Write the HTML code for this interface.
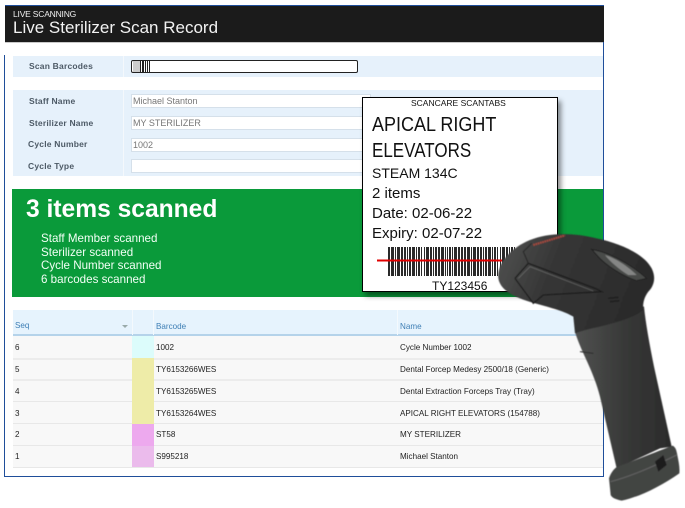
<!DOCTYPE html>
<html><head><meta charset="utf-8">
<style>
html,body{margin:0;padding:0;background:#fff;}
#p{position:relative;width:685px;height:508px;overflow:hidden;background:#fff;font-family:"Liberation Sans",sans-serif;}
#p div{position:absolute;white-space:nowrap;}
.lb{font-size:8.5px;font-weight:bold;color:#4d5a66;letter-spacing:.2px;left:29px;}
.in{left:131px;width:240px;background:#fff;border:1px solid #d5e0ea;box-sizing:border-box;height:14px;font-size:9px;line-height:12px;color:#777;padding-left:1px;}
.c{font-size:8.1px;color:#222;line-height:12px;margin-top:1px;}
.l{font-family:"Liberation Sans",sans-serif;color:#111;left:372px;transform-origin:0 50%;}
</style></head><body><div id="p">
<div style="left:5px;top:5px;width:599px;height:37px;background:#1b1b1b;border-top:1px solid #1f4e9a;box-sizing:border-box;"></div>
<div style="left:5px;top:42px;width:599px;height:1px;background:#c9c9c9;"></div>
<div style="left:13px;top:9px;font-size:8.5px;color:#eee;letter-spacing:-.2px;">LIVE SCANNING</div>
<div style="left:13px;top:17px;font-size:17px;line-height:21px;color:#f2f2f2;">Live Sterilizer Scan Record</div>
<!-- frame -->
<div style="left:4px;top:55px;width:1px;height:422px;background:#1f4e9a;"></div>
<div style="left:4px;top:476px;width:600px;height:1px;background:#1f4e9a;"></div>
<div style="left:603px;top:42px;width:1px;height:435px;background:#1f4e9a;"></div>
<!-- scan row -->
<div style="left:13px;top:56px;width:590px;height:21px;background:#e6f1fb;"></div>
<div style="left:123px;top:56px;width:1px;height:21px;background:#f4f8fc;"></div>
<div class="lb" style="top:61px;">Scan Barcodes</div>
<div style="left:131px;top:60px;width:227px;height:13px;background:#fff;border:1px solid #222;border-radius:2px;box-sizing:border-box;"></div>
<svg style="position:absolute;left:133px;top:61px;" width="18" height="11"><rect x="0" y="0" width="7" height="11" fill="#ccc"/><path d="M7 5.5H17" stroke="#222" stroke-width="11" stroke-dasharray="1 1 2 1 1 1 1 1"/></svg>
<!-- form -->
<div style="left:13px;top:90px;width:590px;height:86px;background:#e6f1fb;"></div>
<div style="left:123px;top:90px;width:1px;height:86px;background:#f4f8fc;"></div>
<div class="lb" style="top:96px;">Staff Name</div>
<div class="lb" style="top:118px;">Sterilizer Name</div>
<div class="lb" style="top:139px;left:28px;">Cycle Number</div>
<div class="lb" style="top:161px;left:28px;">Cycle Type</div>
<div class="in" style="top:94px;">Michael Stanton</div>
<div class="in" style="top:116px;">MY STERILIZER</div>
<div class="in" style="top:138px;">1002</div>
<div class="in" style="top:159px;"></div>
<!-- green -->
<div style="left:12px;top:189px;width:591px;height:108px;background:#0a9a3a;"></div>
<div style="left:26px;top:196px;font-size:24.6px;line-height:28px;font-weight:bold;color:#fff;">3 items scanned</div>
<div style="left:41px;top:232px;font-size:11.6px;line-height:13.7px;color:#f2fff5;white-space:pre;">Staff Member scanned
Sterilizer scanned
Cycle Number scanned
6 barcodes scanned</div>
<!-- table -->
<div style="left:13px;top:310px;width:590px;height:26px;background:#e6f3fd;border-bottom:2px solid #b5d3ea;box-sizing:border-box;"></div>
<div style="left:132px;top:310px;width:1px;height:25px;background:#f4f9fd;"></div>
<div style="left:153px;top:310px;width:1px;height:25px;background:#f4f9fd;"></div>
<div style="left:397px;top:310px;width:1px;height:25px;background:#f4f9fd;"></div>
<div class="c" style="left:15px;top:319px;color:#3f7fb5;">Seq</div>
<div style="left:121.5px;top:325px;width:0;height:0;border-left:3px solid transparent;border-right:3px solid transparent;border-top:3px solid #9aa;"></div>
<div class="c" style="left:156px;top:320px;color:#3f7fb5;">Barcode</div>
<div class="c" style="left:400px;top:320px;color:#3f7fb5;">Name</div>
<div style="left:13px;top:336px;width:590px;height:131px;background:#f8f8f8;"></div>
<div style="left:13px;top:358px;width:590px;height:2px;background:#ececec;"></div>
<div style="left:13px;top:379px;width:590px;height:2px;background:#ececec;"></div>
<div style="left:13px;top:401px;width:590px;height:1px;background:#e8e8e8;"></div>
<div style="left:13px;top:423px;width:590px;height:1px;background:#e8e8e8;"></div>
<div style="left:13px;top:445px;width:590px;height:1px;background:#e8e8e8;"></div>
<div style="left:13px;top:467px;width:590px;height:1px;background:#e8e8e8;"></div>
<div style="left:132px;top:336px;width:22px;height:22px;background:#dcfcfb;"></div>
<div style="left:132px;top:358px;width:22px;height:66px;background:#eeeca8;"></div>
<div style="left:132px;top:424px;width:22px;height:22px;background:#eda9ee;"></div>
<div style="left:132px;top:446px;width:22px;height:21px;background:#ebbbec;"></div>
<div class="c" style="left:15px;top:341px;">6</div><div class="c" style="left:156px;top:341px;">1002</div><div class="c" style="left:400px;top:341px;">Cycle Number 1002</div>
<div class="c" style="left:15px;top:363px;">5</div><div class="c" style="left:156px;top:363px;">TY6153266WES</div><div class="c" style="left:400px;top:363px;">Dental Forcep Medesy 2500/18 (Generic)</div>
<div class="c" style="left:15px;top:385px;">4</div><div class="c" style="left:156px;top:385px;">TY6153265WES</div><div class="c" style="left:400px;top:385px;">Dental Extraction Forceps Tray (Tray)</div>
<div class="c" style="left:15px;top:407px;">3</div><div class="c" style="left:156px;top:407px;">TY6153264WES</div><div class="c" style="left:400px;top:407px;">APICAL RIGHT ELEVATORS (154788)</div>
<div class="c" style="left:15px;top:428px;">2</div><div class="c" style="left:156px;top:428px;">ST58</div><div class="c" style="left:400px;top:428px;">MY STERILIZER</div>
<div class="c" style="left:15px;top:450px;">1</div><div class="c" style="left:156px;top:450px;">S995218</div><div class="c" style="left:400px;top:450px;">Michael Stanton</div>
<!-- label -->
<div style="left:362px;top:97px;width:196px;height:195px;background:#fff;border:1px solid #000;box-sizing:border-box;box-shadow:3px 4px 5px rgba(0,0,0,.45);"></div>
<div style="left:411px;top:98px;font-size:8.5px;line-height:11px;color:#111;">SCANCARE SCANTABS</div>
<div class="l" style="top:113px;font-size:20px;line-height:24px;transform:scaleX(.9);">APICAL RIGHT</div>
<div class="l" style="top:139px;font-size:20px;line-height:24px;transform:scaleX(.85);">ELEVATORS</div>
<div class="l" style="top:163px;font-size:14px;line-height:20px;">STEAM 134C</div>
<div class="l" style="top:184px;font-size:15px;line-height:20px;">2 items</div>
<div class="l" style="top:204px;font-size:15px;line-height:20px;">Date: 02-06-22</div>
<div class="l" style="top:224px;font-size:15px;line-height:20px;">Expiry: 02-07-22</div>
<svg style="position:absolute;left:377px;top:245px;" width="150" height="34">
<path d="M11 16.5H138" stroke="#2a2a2a" stroke-width="29" stroke-dasharray="2 1 3 1 1 1 3 1 2 1 2 1 1 1 2 1 3 1 1 1 2 1 1 2 1 1 3 1 2 1 1 1 2 1 2 1 3 1 1 1 1 1 2 1 1 1 3 1 2 1 2 1"/>
<rect x="0" y="14.5" width="125" height="2" fill="#e00000"/>
</svg>
<div style="left:432px;top:280px;font-size:12px;line-height:12px;color:#111;">TY123456</div>
<!-- scanner -->
<svg style="position:absolute;left:480px;top:210px;" width="205" height="298" viewBox="0 0 615 894">
<defs>
<linearGradient id="g" x1="0" y1="0" x2="1" y2="0.25"><stop offset="0" stop-color="#525352"/><stop offset=".4" stop-color="#363636"/><stop offset="1" stop-color="#2b2b2b"/></linearGradient>
<linearGradient id="h" x1="0" y1="0" x2="1" y2="0"><stop offset="0" stop-color="#505150"/><stop offset=".5" stop-color="#383938"/><stop offset="1" stop-color="#2b2b2b"/></linearGradient>
<filter id="b"><feGaussianBlur stdDeviation="1.5"/></filter>
</defs>
<g filter="url(#b)">
<path fill="url(#h)" d="M285 365 C300 420 340 480 360 560 L410 775 L540 715 L575 710 L522 470 C508 400 497 340 492 290 L380 270 Z"/>
<path fill="url(#g)" d="M55 190 C60 150 100 110 150 90 C200 70 270 65 350 85 C420 100 490 130 515 175 C530 205 520 230 505 245 C490 265 488 285 490 300 C440 340 340 350 285 370 L280 320 C240 295 170 285 120 265 C80 250 50 225 55 190 Z"/>
<path fill="#434443" d="M387 805 C392 790 400 778 412 770 C470 750 530 725 578 707 C588 712 590 725 592 735 C596 755 600 775 598 790 C540 830 480 860 425 872 C405 868 395 862 392 855 Z"/>
<path fill="none" stroke="#636463" stroke-width="3" d="M392 815 C450 800 530 765 590 735"/>
<path fill="#1e1e1e" d="M525 755 L550 735 L560 765 L535 785 Z"/>
<path fill="none" stroke="#1e1e1e" stroke-width="4" d="M105 205 L145 160 L345 235 L365 245 L190 255 L160 280 L105 205"/>
<path fill="none" stroke="#6a6b6a" stroke-width="2" d="M115 205 L150 170 L340 243"/>
<path fill="none" stroke="#222" stroke-width="3" d="M145 160 L130 125 L155 100"/>
<path fill="#4a4b4a" stroke="#222" stroke-width="3" d="M335 118 C380 125 450 160 500 205 L470 212 C430 200 375 165 350 135 Z"/>
<path fill="#858685" d="M375 135 C410 145 450 175 470 195 L445 195 C420 180 390 155 375 135 Z"/>
<path stroke="#a8483c" stroke-width="6" stroke-dasharray="5 2" d="M160 105 L255 76" fill="none"/>
<path stroke="#1c1c1c" stroke-width="4" d="M385 265 L415 262 M390 275 L418 272" fill="none"/>
<path stroke="#2a2a2a" stroke-width="3" d="M300 425 L340 430" fill="none"/>
</g>
</svg>
</div></body></html>
